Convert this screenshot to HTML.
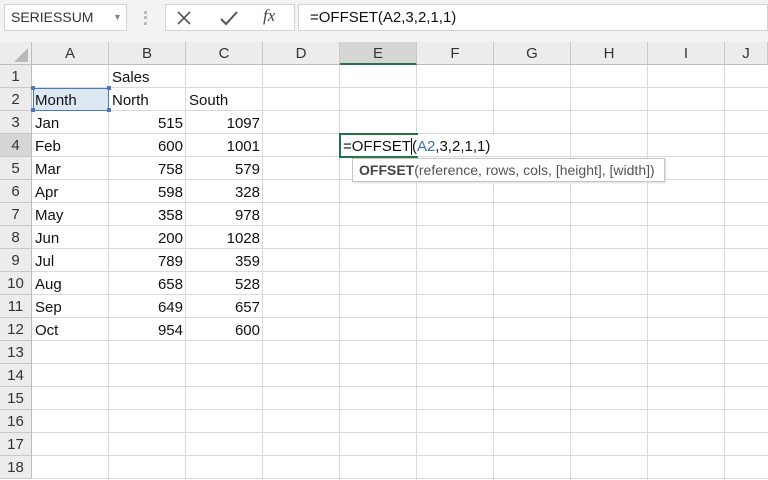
<!DOCTYPE html><html><head><style>
*{margin:0;padding:0;box-sizing:border-box}
body{width:768px;height:480px;overflow:hidden;background:#fff;font-family:"Liberation Sans",sans-serif;position:relative}
.a{position:absolute}
.top{left:0;top:0;width:768px;height:42px;background:#f3f3f3}
.box{background:#fff;border:1px solid #d4d4d4}
.ch{top:42px;height:23px;background:#ececec;border-right:1px solid #c8c8c8;border-bottom:1px solid #bdbdbd;text-align:center;font-size:15px;line-height:23px;color:#333}
.rh{left:0;width:32px;height:23px;background:#ececec;border-bottom:1px solid #c8c8c8;border-right:1px solid #bdbdbd;text-align:center;font-size:15px;line-height:24px;color:#333}
.vl{top:65px;width:1px;height:415px;background:#dadada}
.hl{left:32px;width:736px;height:1px;background:#dadada}
.t{font-size:15px;line-height:23px;color:#111}
.r{text-align:right}
</style></head><body>
<div class="a top"></div>
<div class="a box" style="left:4px;top:4px;width:123px;height:27px;font-size:14px;line-height:25px;padding-left:6px;color:#333">SERIESSUM<span style="position:absolute;left:108px;font-size:9px;color:#888">▼</span></div>
<div class="a" style="left:144px;top:11px;width:3px;height:14px;border-left:3px dotted #bbb"></div>
<div class="a box" style="left:165px;top:4px;width:130px;height:27px"></div>
<svg class="a" style="left:176px;top:10px" width="16" height="16"><path d="M2 2L14 14M14 2L2 14" stroke="#555" stroke-width="1.6"/></svg>
<svg class="a" style="left:219px;top:10px" width="20" height="16"><path d="M2 9L7 14L18 2" stroke="#555" stroke-width="2" fill="none"/></svg>
<div class="a" style="left:263px;top:6px;font-size:17px;color:#444;font-family:'Liberation Serif',serif;font-style:italic">fx</div>
<div class="a box" style="left:298px;top:4px;width:470px;height:27px;font-size:15px;line-height:25px;padding-left:11px;color:#111">=OFFSET(A2,3,2,1,1)</div>
<div class="a" style="left:0;top:42px;width:32px;height:23px;background:#ececec;border-right:1px solid #bdbdbd;border-bottom:1px solid #bdbdbd"></div>
<div class="a" style="left:14px;top:48px;width:0;height:0;border-left:14px solid transparent;border-bottom:14px solid #b8b8b8"></div>
<div class="a ch" style="left:32px;width:77px">A</div>
<div class="a ch" style="left:109px;width:77px">B</div>
<div class="a ch" style="left:186px;width:77px">C</div>
<div class="a ch" style="left:263px;width:77px">D</div>
<div class="a ch" style="left:340px;width:77px;background:#d6d6d6;border-bottom:2px solid #217346">E</div>
<div class="a ch" style="left:417px;width:77px">F</div>
<div class="a ch" style="left:494px;width:77px">G</div>
<div class="a ch" style="left:571px;width:77px">H</div>
<div class="a ch" style="left:648px;width:77px">I</div>
<div class="a ch" style="left:725px;width:43px">J</div>
<div class="a vl" style="left:108px"></div><div class="a vl" style="left:185px"></div><div class="a vl" style="left:262px"></div><div class="a vl" style="left:339px"></div><div class="a vl" style="left:416px"></div><div class="a vl" style="left:493px"></div><div class="a vl" style="left:570px"></div><div class="a vl" style="left:647px"></div><div class="a vl" style="left:724px"></div>
<div class="a hl" style="top:87px"></div><div class="a hl" style="top:110px"></div><div class="a hl" style="top:133px"></div><div class="a hl" style="top:156px"></div><div class="a hl" style="top:179px"></div><div class="a hl" style="top:202px"></div><div class="a hl" style="top:225px"></div><div class="a hl" style="top:248px"></div><div class="a hl" style="top:271px"></div><div class="a hl" style="top:294px"></div><div class="a hl" style="top:317px"></div><div class="a hl" style="top:340px"></div><div class="a hl" style="top:363px"></div><div class="a hl" style="top:386px"></div><div class="a hl" style="top:409px"></div><div class="a hl" style="top:432px"></div><div class="a hl" style="top:455px"></div><div class="a hl" style="top:478px"></div>
<div class="a rh" style="top:65px">1</div><div class="a rh" style="top:88px">2</div><div class="a rh" style="top:111px">3</div><div class="a rh" style="top:134px;background:#d6d6d6">4</div><div class="a rh" style="top:157px">5</div><div class="a rh" style="top:180px">6</div><div class="a rh" style="top:203px">7</div><div class="a rh" style="top:226px">8</div><div class="a rh" style="top:249px">9</div><div class="a rh" style="top:272px">10</div><div class="a rh" style="top:295px">11</div><div class="a rh" style="top:318px">12</div><div class="a rh" style="top:341px">13</div><div class="a rh" style="top:364px">14</div><div class="a rh" style="top:387px">15</div><div class="a rh" style="top:410px">16</div><div class="a rh" style="top:433px">17</div><div class="a rh" style="top:456px">18</div>
<div class="a" style="left:33px;top:88px;width:76px;height:23px;background:#dde8f3;border:1px solid #4a7ab8"></div>
<div class="a" style="left:31px;top:86px;width:4px;height:4px;background:#4a7ab8"></div><div class="a" style="left:107px;top:86px;width:4px;height:4px;background:#4a7ab8"></div><div class="a" style="left:31px;top:108px;width:4px;height:4px;background:#4a7ab8"></div><div class="a" style="left:107px;top:108px;width:4px;height:4px;background:#4a7ab8"></div>
<div class="a t" style="left:112px;top:66px">Sales</div>
<div class="a t" style="left:35px;top:89px">Month</div><div class="a t" style="left:112px;top:89px">North</div><div class="a t" style="left:189px;top:89px">South</div>
<div class="a t" style="left:35px;top:112px;line-height:23px">Jan<br>Feb<br>Mar<br>Apr<br>May<br>Jun<br>Jul<br>Aug<br>Sep<br>Oct</div>
<div class="a t r" style="left:110px;top:112px;width:73px">515<br>600<br>758<br>598<br>358<br>200<br>789<br>658<br>649<br>954</div>
<div class="a t r" style="left:187px;top:112px;width:73px">1097<br>1001<br>579<br>328<br>978<br>1028<br>359<br>528<br>657<br>600</div>
<div class="a" style="left:339px;top:133px;width:79px;height:25px;border:2px solid #217346"></div>
<div class="a" style="left:341px;top:135px;width:155px;height:21px;background:#fff;font-size:15px;line-height:23px;padding-left:2px;color:#111">=OFFSET<span style="border-left:1px solid #111">(</span><span style="color:#3c6fb4">A2</span>,3,2,1,1)</div>
<div class="a" style="left:352px;top:158px;width:313px;height:24px;background:#fff;border:1px solid #c6c6c6;box-shadow:1px 1px 2px #ddd;font-size:14px;line-height:22px;padding-left:6px;color:#555"><b style="color:#444">OFFSET</b>(reference, rows, cols, [height], [width])</div>
</body></html>
